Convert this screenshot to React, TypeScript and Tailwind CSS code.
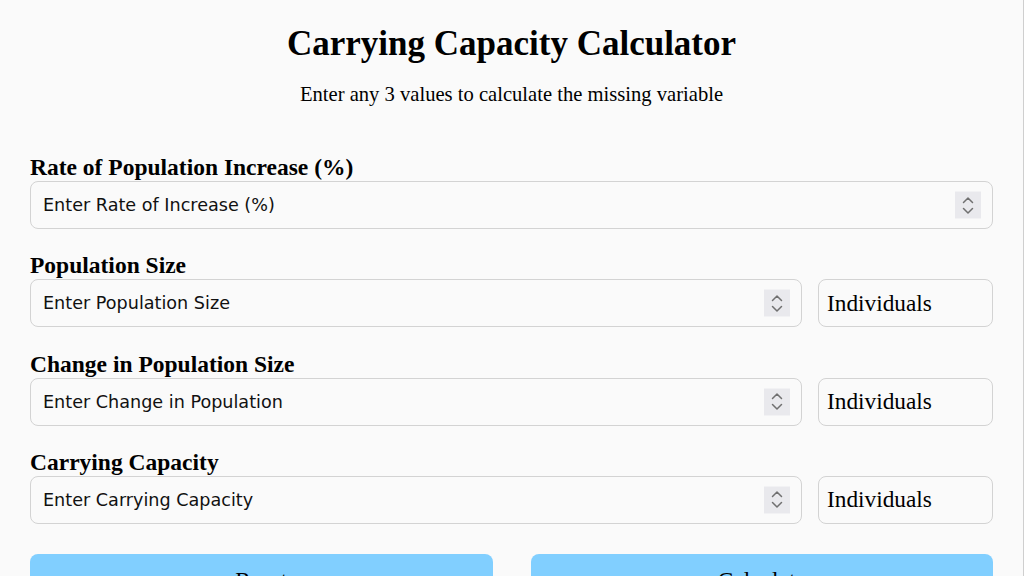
import { useState } from "react";

const serif = { fontFamily: '"Liberation Serif", "Times New Roman", serif' };

interface FieldProps {
  label: string;
  placeholder: string;
  unit?: string;
}

function Spinner() {
  return (
    <div className="pointer-events-none absolute right-3 top-1/2 -translate-y-1/2 flex h-[27px] w-[26px] items-center justify-center bg-[#e9e9ed]">
      <svg width="14" height="22" viewBox="0 0 14 22" fill="none" stroke="#707070" strokeWidth="1.5" strokeLinecap="round" strokeLinejoin="round">
        <path d="M2.5 8 L7 3.5 L11.5 8" />
        <path d="M2.5 14 L7 18.5 L11.5 14" />
      </svg>
    </div>
  );
}

function Field({ label, placeholder, unit }: FieldProps) {
  const [value, setValue] = useState("");
  return (
    <div className="flex flex-col">
      <label className="mb-px text-[23.5px] font-bold leading-[26px] text-black" style={serif}>
        {label}
      </label>
      <div className="flex gap-4">
        <div className="relative flex-1">
          <input
            type="number"
            value={value}
            onChange={(e) => setValue(e.target.value)}
            placeholder={placeholder}
            className="h-12 w-full rounded-lg border border-[#d3d3d3] bg-[#fafafa] pl-3 pr-12 text-[17.6px] text-[#111] placeholder:text-[#111] outline-none [appearance:textfield] [&::-webkit-inner-spin-button]:appearance-none [&::-webkit-outer-spin-button]:appearance-none"
            style={{ fontFamily: '"DejaVu Sans", Verdana, sans-serif' }}
          />
          <Spinner />
        </div>
        {unit && (
          <div
            className="flex h-12 w-[175px] items-center rounded-lg border border-[#d3d3d3] bg-[#fafafa] px-2 text-[23.3px] text-black"
            style={serif}
          >
            {unit}
          </div>
        )}
      </div>
    </div>
  );
}

export default function App() {
  return (
    <div className="min-h-screen w-full border-r border-[#cfcfcf] bg-[#fafafa]">
      <div className="px-[30px] pb-10 pt-6">
        <h1 className="text-center text-[35px] font-bold leading-10 text-black" style={serif}>
          Carrying Capacity Calculator
        </h1>
        <p className="mt-[18px] text-center text-[20.6px] leading-6 text-black" style={serif}>
          Enter any 3 values to calculate the missing variable
        </p>

        <div className="mt-12 flex flex-col gap-[23.3px]">
          <Field label="Rate of Population Increase (%)" placeholder="Enter Rate of Increase (%)" />
          <Field label="Population Size" placeholder="Enter Population Size" unit="Individuals" />
          <Field label="Change in Population Size" placeholder="Enter Change in Population" unit="Individuals" />
          <Field label="Carrying Capacity" placeholder="Enter Carrying Capacity" unit="Individuals" />
        </div>

        <div className="mt-[30px] grid grid-cols-2 gap-[38px]">
          <button className="rounded-lg bg-[#81cfff] py-[13px] text-[23.3px] leading-[26px] text-black" style={serif}>
            Reset
          </button>
          <button className="rounded-lg bg-[#81cfff] py-[13px] text-[23.3px] leading-[26px] text-black" style={serif}>
            Calculate
          </button>
        </div>
      </div>
    </div>
  );
}
